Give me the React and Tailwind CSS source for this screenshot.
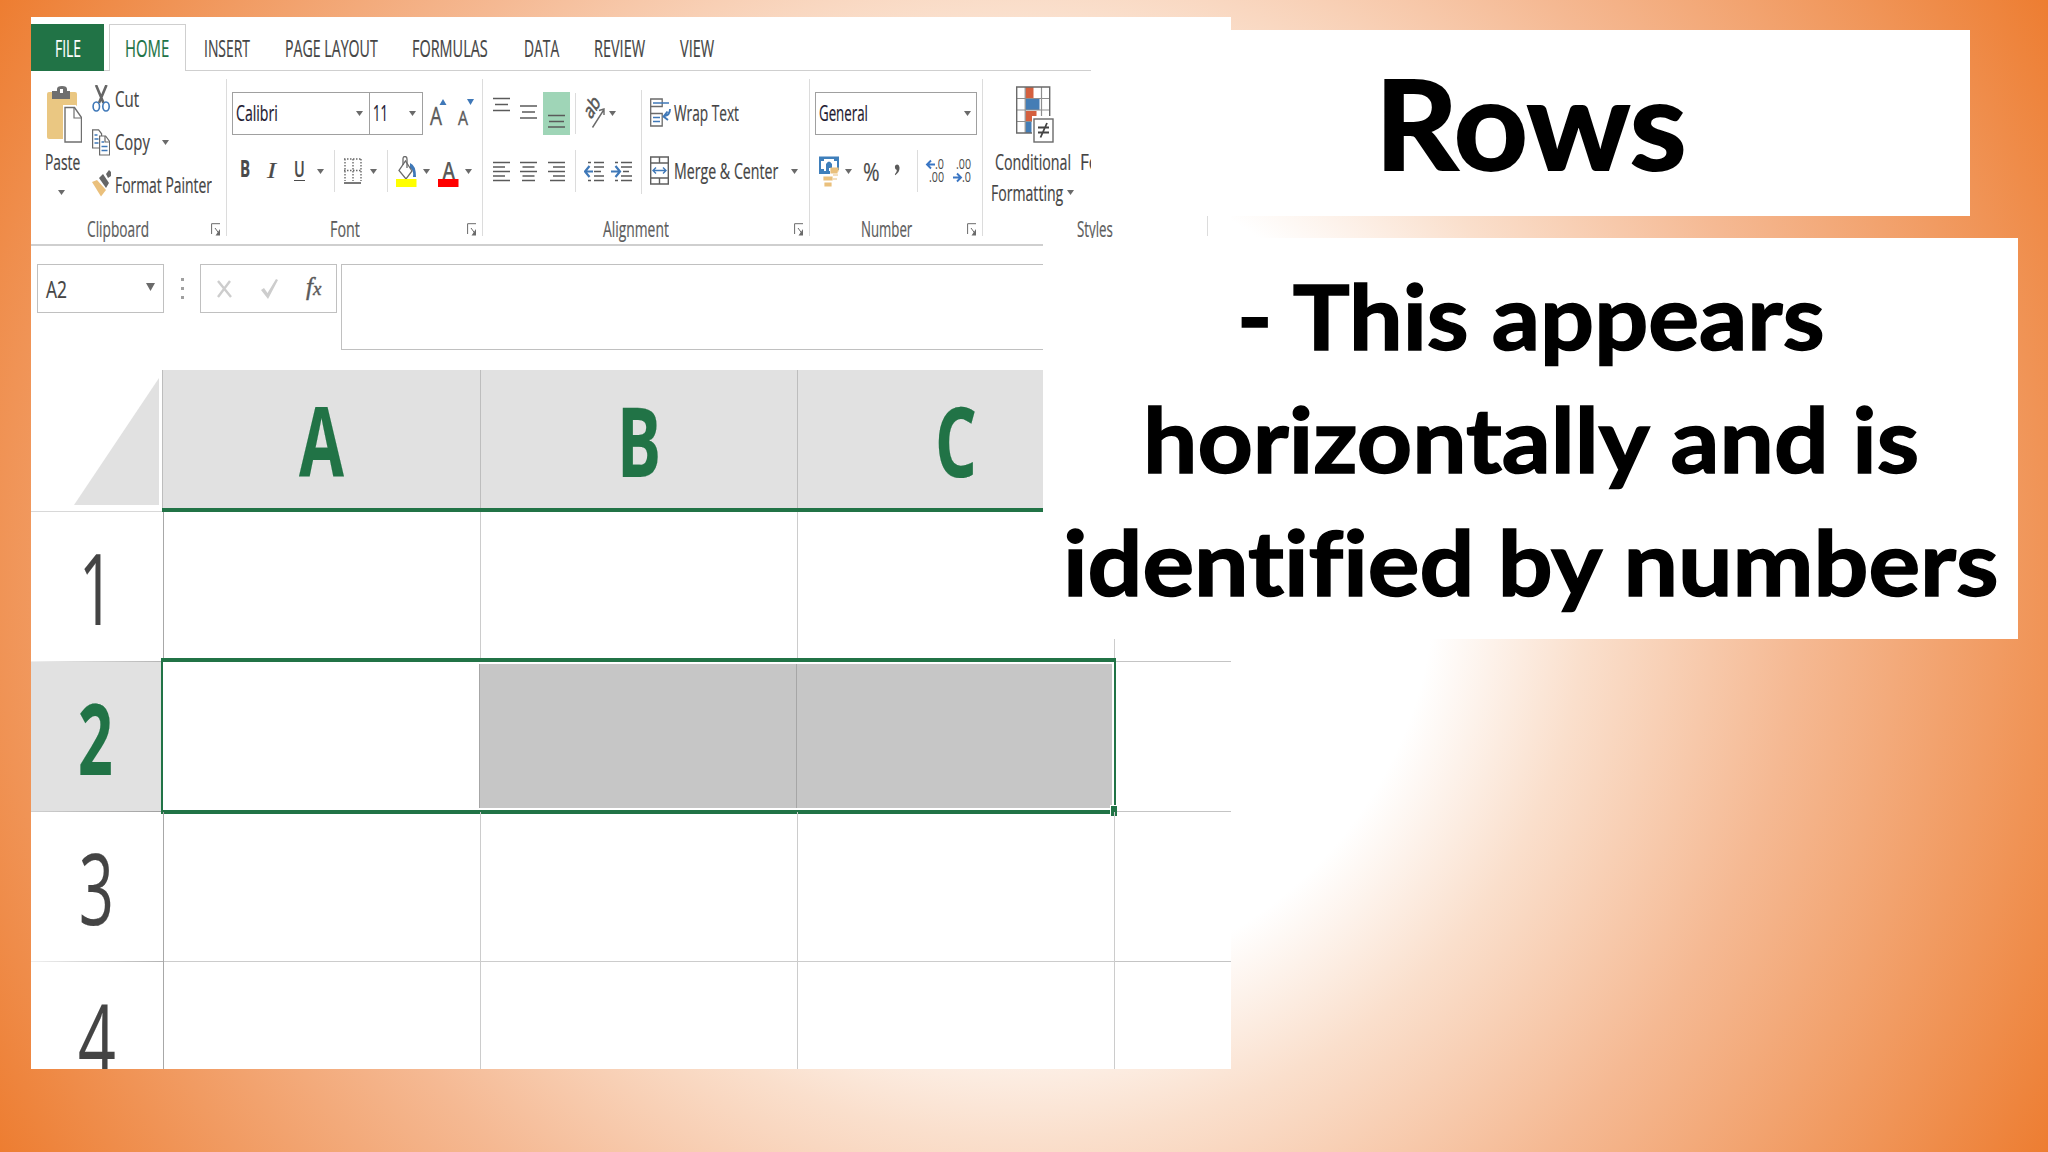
import { useLayoutEffect, useRef } from 'react'
import clsx from 'clsx'

// Text squeezed (or stretched) horizontally to an exact width
function Fit({ w, className, children }) {
  const ref = useRef(null)

  useLayoutEffect(() => {
    const el = ref.current
    el.style.transform = `scaleX(${w / el.offsetWidth})`
  }, [w, children])

  return (
    <span className={clsx('block shrink-0 leading-none', className)} style={{ width: w }}>
      <span ref={ref} className="inline-block origin-left whitespace-pre">{children}</span>
    </span>
  )
}

function Caret({ className }) {
  return (
    <svg viewBox="0 0 7 5" className={clsx('h-[5px] w-[7px] shrink-0', className)}>
      <path d="M0 0h7L3.5 5z" fill="#6a6a6a" />
    </svg>
  )
}

function Sep({ className }) {
  return <div className={clsx('w-px shrink-0 bg-[#dcdcdc]', className)} />
}

function Launcher() {
  return (
    <svg viewBox="0 0 10 13" className="h-[13px] w-[10px] shrink-0" fill="none" stroke="#6a6a6a">
      <path d="M.6 11V.7H9" />
      <path d="M4 5l4 5.5" />
      <path d="M9 6v6.5H4.5z" fill="#6a6a6a" stroke="none" />
    </svg>
  )
}

function Lines({ rows, className, w = 17 }) {
  return (
    <svg viewBox={`0 0 ${w} 43`} className={clsx('h-[43px] shrink-0', className)} stroke="#5a5a5a" strokeWidth="1.5">
      {rows.map(([x1, x2, y]) => (
        <path key={y} d={`M${x1} ${y}H${x2}`} />
      ))}
    </svg>
  )
}

function Group({ label, labelWidth, className, labelClass, launcher = true, children }) {
  return (
    <div className={clsx('flex h-[157px] shrink-0 flex-col border-r border-[#dcdcdc]', className)}>
      <div className="h-[137px] shrink-0">{children}</div>
      <div className="flex h-[25px] shrink-0 items-center">
        <Fit w={labelWidth} className={clsx('mt-[2px] text-[21px] text-[#5c5c5c]', labelClass)}>{label}</Fit>
        {launcher && <div className="mr-[5px] ml-auto pt-px"><Launcher /></div>}
      </div>
    </div>
  )
}

function PasteIcon() {
  return (
    <svg viewBox="0 0 36 57" className="h-[57px] w-[36px]">
      <rect x="1" y="6" width="30" height="47" rx="2" fill="#eac782" />
      <path d="M6 5h5V3q0-3 5-3t5 3v2h3v8H6z" fill="#6f6f6f" />
      <rect x="14" y="3" width="3" height="4" fill="#fff" />
      <path d="M17 19h13l7 10v30H17z" fill="#fff" />
      <path d="M19 21.5h9.500l7 10V56H19z" fill="#fff" stroke="#6f6f6f" strokeWidth="1.4" />
      <path d="M28 21.500V32h7" fill="none" stroke="#6f6f6f" strokeWidth="1.200" />
    </svg>
  )
}

function CutIcon() {
  return (
    <svg viewBox="0 0 18 27" className="h-[27px] w-[18px]" fill="none">
      <path d="M4 0l7.500 18M14.500 0L7 18" stroke="#666" strokeWidth="2.600" />
      <ellipse cx="4.300" cy="21.500" rx="3.200" ry="4.500" stroke="#3f78b8" strokeWidth="1.600" />
      <ellipse cx="14" cy="21.500" rx="3.200" ry="4.500" stroke="#3f78b8" strokeWidth="1.600" />
    </svg>
  )
}

function CopyIcon() {
  return (
    <svg viewBox="0 0 18 27" className="h-[27px] w-[18px]" fill="#fff" stroke="#6a6a6a" strokeWidth="1.200">
      <path d="M.6.800h6l3 4V19h-9z" />
      <path d="M2.500 6h3M2.500 10h4M2.500 14h4" stroke="#3f78b8" strokeWidth="1.500" />
      <path d="M7.600 7h6l4 5.500V26h-10z" />
      <path d="M13 7v6h4.500" fill="none" />
      <path d="M9.500 13h2.500M9.500 17.500h6M9.500 21.500h6" stroke="#3f78b8" strokeWidth="1.500" />
    </svg>
  )
}

function PainterIcon() {
  return (
    <svg viewBox="0 0 19 27" className="h-[27px] w-[19px]">
      <path d="M0 12l5-2 9 10-5 6.500z" fill="#eac07c" />
      <path d="M7 8l4-4 6 9-3 5z" fill="#666" />
      <path d="M14 4l3-4 2 2v4l-3 2z" fill="#666" />
    </svg>
  )
}

function ClipboardGroup() {
  return (
    <Group label="Clipboard" labelWidth={62} labelClass="ml-[56px]" className="w-[196px]">
      <div className="flex">
        <div className="flex w-[61px] flex-col pt-[7px] pl-[14px]">
          <div className="ml-px"><PasteIcon /></div>
          <div className="flex h-[39px] items-center"><Fit w={35}>Paste</Fit></div>
          <div className="flex h-[21px] items-center"><Caret className="ml-[13px]" /></div>
        </div>
        <div className="flex flex-col">
          <div className="flex h-[41px] items-center gap-[5px]">
            <div className="-mt-[2px]"><CutIcon /></div>
            <Fit w={24}>Cut</Fit>
          </div>
          <div className="flex h-[44px] items-center gap-[5px]">
            <CopyIcon />
            <Fit w={35}>Copy</Fit>
            <Caret className="ml-[7px]" />
          </div>
          <div className="flex h-[43px] items-center gap-1">
            <div className="-mt-[5px]"><PainterIcon /></div>
            <Fit w={97}>Format Painter</Fit>
          </div>
        </div>
      </div>
    </Group>
  )
}

function FontGroup() {
  return (
    <Group label="Font" labelWidth={30} labelClass="ml-[103px]" className="w-[256px]">
      <div className="flex flex-col gap-[14px] pt-[13px] pl-[5px]">
        <div className="flex h-[43px] items-center">
          <div className="flex h-[43px] w-[138px] items-center border-[1.5px] border-[#a0a0a0] pl-[3px] text-[#1d1830]">
            <Fit w={42}>Calibri</Fit>
            <Caret className="mr-1.5 ml-auto" />
          </div>
          <div className="-ml-px flex h-[43px] w-[54px] items-center border-[1.5px] border-[#a0a0a0] pl-[3px] text-[#1d1830]">
            <Fit w={15}>11</Fit>
            <Caret className="mr-[6px] ml-auto" />
          </div>
          <svg viewBox="0 0 17 30" className="ml-[7px] h-[30px] w-[17px] overflow-visible">
            <text x="0" y="25.500" fontSize="25" fill="#5a5a5a" stroke="#5a5a5a" strokeWidth=".4" textLength="12" lengthAdjust="spacingAndGlyphs">A</text>
            <path d="M9.500 6l3.500-6 3.500 6z" fill="#3f78b8" />
          </svg>
          <svg viewBox="0 0 17 30" className="ml-[11px] h-[30px] w-[17px] overflow-visible">
            <text x="0" y="25.500" fontSize="20" fill="#5a5a5a" stroke="#5a5a5a" strokeWidth=".4" textLength="10" lengthAdjust="spacingAndGlyphs">A</text>
            <path d="M9 0h7l-3.500 6z" fill="#3f78b8" />
          </svg>
        </div>
        <div className="flex h-[44px] items-center">
          <Fit w={10} className="ml-[8px] -mt-[3px] font-bold text-[#4a4a4a]">B</Fit>
          <Fit w={9} className="ml-[17px] -mt-[3px] text-[24px] italic text-[#4a4a4a] [font-family:'Liberation_Serif',serif]">I</Fit>
          <div className="ml-[18px] -mt-[2px] border-b-[1.5px] border-[#4a4a4a]">
            <Fit w={11} className="text-[21px] font-semibold text-[#4a4a4a]">U</Fit>
          </div>
          <Caret className="ml-[12px]" />
          <Sep className="ml-[10px] h-[42px]" />
          <svg viewBox="0 0 18 26" className="ml-[9px] h-[26px] w-[18px] shrink-0" stroke="#6a6a6a" fill="none" strokeWidth="1.400">
            <path d="M0 1h18M0 12.500h18M1 1v22M9 1v22M17 1v22" strokeDasharray="1.500 1.500" />
            <path d="M0 25h17" strokeWidth="1.800" />
          </svg>
          <Caret className="ml-[8px]" />
          <Sep className="ml-[10px] h-[42px]" />
          <svg viewBox="0 0 21 31" className="ml-[8px] h-[31px] w-[21px] shrink-0">
            <path d="M14 7q6 2 6 14h-3q1-7-3-9z" fill="#3f78b8" />
            <path d="M9.500 5l6.500 10-6 8-7-8.500z" fill="#fff" stroke="#6a6a6a" strokeWidth="1.300" />
            <path d="M7 9V3q0-2.500 2-2.500T11 3v9" fill="none" stroke="#6a6a6a" strokeWidth="1.300" />
            <rect x="0" y="23" width="20.500" height="8" fill="#ff0" />
          </svg>
          <Caret className="ml-[6px]" />
          <svg viewBox="0 0 21 31" className="ml-[8px] h-[31px] w-[21px] shrink-0 overflow-visible">
            <text x="4.500" y="22.500" fontSize="24" fontWeight="600" fill="#5a5a5a" textLength="12.500" lengthAdjust="spacingAndGlyphs">A</text>
            <rect x="0" y="23" width="20.500" height="8" fill="#f00" />
          </svg>
          <Caret className="ml-[6px]" />
        </div>
      </div>
    </Group>
  )
}

function AlignmentGroup() {
  return (
    <Group label="Alignment" labelWidth={66} labelClass="ml-[120px]" className="w-[327px]">
      <div className="flex">
        <div className="flex w-[158px] flex-col gap-[14px] pt-[13px] pl-[10px]">
          <div className="flex h-[43px] items-center">
            <Lines className="w-[17px]" rows={[[0, 17, 6.5], [2, 15, 12.5], [0, 17, 18.5]]} />
            <Lines className="ml-[10px] w-[17px]" rows={[[0, 17, 14], [2, 15, 20], [0, 17, 26]]} />
            <div className="ml-[6px] flex w-[27px] justify-center bg-[#9fd5b7]">
              <Lines className="w-[17px]" rows={[[0, 17, 23.5], [1, 16, 29.5], [0, 17, 35]]} />
            </div>
            <Sep className="ml-[5px] h-[41px]" />
            <svg viewBox="0 0 21 29" className="ml-[8px] h-[29px] w-[21px] shrink-0 overflow-visible">
              <text transform="translate(7 21) scale(.72 1) rotate(-50)" fontSize="22" fill="#555" stroke="#555" strokeWidth=".7" textLength="22" lengthAdjust="spacingAndGlyphs">ab</text>
              <path d="M8.500 28.500L20 10.500M15 11.500l5-1.500V16" fill="none" stroke="#6a6a6a" strokeWidth="1.400" />
            </svg>
            <Caret className="ml-[4px]" />
          </div>
          <div className="flex h-[44px] items-center">
            <Lines className="w-[17px]" rows={[[0, 17, 12.5], [0, 12, 17], [0, 17, 21.5], [0, 12, 26], [0, 17, 30.5]]} />
            <Lines className="ml-[10px] w-[17px]" rows={[[0, 17, 12.5], [2.5, 14.5, 17], [0, 17, 21.5], [2.5, 14.5, 26], [2, 15, 30.5]]} />
            <Lines className="ml-[11px] w-[17px]" rows={[[0, 17, 12.5], [5, 17, 17], [0, 17, 21.5], [5, 17, 26], [2, 17, 30.5]]} />
            <Sep className="ml-[10px] h-[42px]" />
            <svg viewBox="0 0 21 43" className="ml-[8px] h-[43px] w-[21px] shrink-0" fill="none" stroke="#5a5a5a" strokeWidth="1.500">
              <path d="M4 12.500h3M10 12.500h10M10 17h10M10 21.500h7M10 26h10M4 30.500h3M10 30.500h10" />
              <path d="M9 21.500H1.500M5.500 16l-4.500 5.500 4.500 5.500" stroke="#3f78b8" strokeWidth="2.200" />
            </svg>
            <svg viewBox="0 0 21 43" className="ml-[6px] h-[43px] w-[21px] shrink-0" fill="none" stroke="#5a5a5a" strokeWidth="1.500">
              <path d="M4 12.500h3M10 12.500h11M10 17h11M12 21.500h6M10 26h11M4 30.500h3M10 30.500h11" />
              <path d="M0 21.500h8M4.500 16L9 21.500 4.500 27" stroke="#3f78b8" strokeWidth="2.200" />
            </svg>
          </div>
        </div>
        <Sep className="mt-[11px] h-[104px]" />
        <div className="ml-[8px] flex flex-col gap-[14px] pt-[13px]">
          <div className="flex h-[43px] items-center">
            <svg viewBox="0 0 21 29" className="-mt-[3px] h-[29px] w-[21px] shrink-0" fill="none" stroke="#6a6a6a" strokeWidth="1.300">
              <path d="M.7 1h11.500v7.500H.7zM.7 15.500h11.500V28H.7z" />
              <path d="M.7 8.500v7" />
              <path d="M3 5h16M3 19.500h7M3 23.500h7" stroke="#3f78b8" strokeWidth="1.600" />
              <path d="M20 11q0 6.500-6 7M17.500 13.500l-4 5 4.500 3.500" stroke="#3f78b8" strokeWidth="1.900" />
            </svg>
            <Fit w={65} className="ml-[3px]">Wrap Text</Fit>
          </div>
          <div className="flex h-[44px] items-center">
            <svg viewBox="0 0 19 29" className="-mt-[2px] h-[29px] w-[19px] shrink-0" fill="none" stroke="#5f5f5f" strokeWidth="1.400">
              <path d="M.7 1h17.600v27H.7zM.7 7h17.600M.7 22h17.600M9.500 1v6M9.500 22v6" />
              <path d="M3.500 14.500h12M6 11.500l-3 3 3 3M13 11.500l3 3-3 3" stroke="#3f78b8" />
            </svg>
            <Fit w={104} className="mt-px ml-[5px]">Merge & Center</Fit>
            <Caret className="ml-[13px]" />
          </div>
        </div>
      </div>
    </Group>
  )
}

function DecimalIcon({ top, bottom, arrow, className }) {
  return (
    <svg viewBox="0 0 18 27" className={clsx('h-[27px] w-[18px] shrink-0 overflow-visible', className)} fill="#4a4a4a" fontSize="15">
      {top}
      {bottom}
      <path d={arrow} fill="none" stroke="#3a76c4" strokeWidth="1.900" />
    </svg>
  )
}

function NumberGroup() {
  return (
    <Group label="Number" labelWidth={51} labelClass="ml-[51px]" className="w-[173px]">
      <div className="flex flex-col gap-[14px] pt-[13px] pl-[5px]">
        <div className="flex h-[43px] w-[162px] items-center border-[1.5px] border-[#a0a0a0] pl-[3px] text-[#1d1830]">
          <Fit w={49}>General</Fit>
          <Caret className="mr-[5px] ml-auto" />
        </div>
        <div className="flex h-[44px] items-center">
          <svg viewBox="0 0 20 31" className="ml-[4px] h-[31px] w-[20px] shrink-0">
            <path d="M0 .500h20V14h-2V5h-3V3H5v2H2v8h3v2h6v3H0z" fill="#3f7fbb" />
            <path d="M7 8q3-5 6 0v4h-3v3H7z" fill="#3f7fbb" />
            <path d="M12 12h7v3h-1v2h-6zM5 21h8v3H5zM6 27h6v3H6zM14 19h5M14 23h4" fill="#eac07c" stroke="#eac07c" strokeWidth="1.200" />
          </svg>
          <Caret className="ml-[6px]" />
          <Fit w={17} className="ml-[11px] text-[26px] text-[#4a4a4a]">%</Fit>
          <svg viewBox="0 0 7 14" className="ml-[14px] -mt-[3px] h-[14px] w-[6px] shrink-0">
            <path d="M1 3.500Q1 .500 3.500.500T6.500 4.500Q6.500 10 1.500 13L1 12Q3.500 9.500 3.300 7 1 6.500 1 3.500z" fill="#5a5a5a" />
          </svg>
          <Sep className="ml-[17px] h-[42px]" />
          <DecimalIcon
            className="ml-[8px] -mt-px"
            top={<text x="9" y="12" textLength="9" lengthAdjust="spacingAndGlyphs">.0</text>}
            bottom={<text x="3" y="25" textLength="15" lengthAdjust="spacingAndGlyphs">.00</text>}
            arrow="M9 7.500H1.500M5 3.500l-4 4 4 4"
          />
          <DecimalIcon
            className="ml-[9px] -mt-px"
            top={<text x="3" y="12" textLength="15" lengthAdjust="spacingAndGlyphs">.00</text>}
            bottom={<text x="9" y="25" textLength="9" lengthAdjust="spacingAndGlyphs">.0</text>}
            arrow="M0 20.500h7.500M4 16.500l4 4-4 4"
          />
        </div>
      </div>
    </Group>
  )
}

function StylesGroup() {
  return (
    <Group label="Styles" labelWidth={36} labelClass="ml-[94px]" className="w-[225px]" launcher={false}>
      <div className="flex w-[120px] flex-col pt-[7px] pl-[8px]">
        <svg viewBox="0 0 38 57" className="ml-[25px] h-[57px] w-[38px]">
          <rect x=".7" y="1" width="33" height="46" fill="#fff" />
          <rect x="9.500" y="1" width="8" height="11" fill="#d4603f" />
          <rect x="9.500" y="13" width="14" height="11" fill="#447db5" />
          <rect x="9.500" y="25" width="11" height="10" fill="#d4603f" />
          <rect x="9.500" y="36" width="6" height="11" fill="#447db5" />
          <path d="M9.200 1v46M25.500 1v34M.7 12.500h33M.7 24h33M.7 35.500h20" stroke="#8f8f8f" fill="none" strokeWidth="1.200" />
          <path d="M33.700 30V1H.7v46h16" stroke="#6a6a6a" fill="none" strokeWidth="1.400" />
          <rect x="16" y="30" width="22" height="27" fill="#fff" />
          <rect x="18" y="33" width="19" height="23" fill="#fff" stroke="#6a6a6a" strokeWidth="1.400" />
          <path d="M22 41.500h11M22 46.500h11M31 37l-6.500 14.500" stroke="#444" strokeWidth="1.800" />
        </svg>
        <div className="flex h-[39px] items-center">
          <Fit w={76} className="ml-[4px]">Conditional</Fit>
          <Fit w={19} className="ml-[9px]">Fo</Fit>
        </div>
        <div className="flex h-[21px] items-center">
          <Fit w={72} className="mt-[2px]">Formatting</Fit>
          <Caret className="ml-[4px]" />
        </div>
      </div>
    </Group>
  )
}

const tabs = [
  { name: 'INSERT', w: 46, className: 'ml-[18px]' },
  { name: 'PAGE LAYOUT', w: 93, className: 'ml-[35px]' },
  { name: 'FORMULAS', w: 76, className: 'ml-[34px]' },
  { name: 'DATA', w: 35, className: 'ml-[36px]' },
  { name: 'REVIEW', w: 51, className: 'ml-[35px]' },
  { name: 'VIEW', w: 34, className: 'ml-[35px]' },
]

function TabBar() {
  return (
    <div className="flex h-[47px] shrink-0 text-[23px]">
      <div className="flex w-[73px] items-center justify-center bg-[#217346] pt-[2px] text-white">
        <Fit w={26}>FILE</Fit>
      </div>
      <div className="w-[5px] border-b-[1.5px] border-[#cfcfcf]" />
      <div className="flex w-[77px] items-center justify-center border-x-[1.5px] border-t-[1.5px] border-[#cfcfcf] pt-px pr-[2px] text-[#217346]">
        <Fit w={44}>HOME</Fit>
      </div>
      <div className="flex flex-1 items-center border-b-[1.5px] border-[#cfcfcf] pt-[2px]">
        {tabs.map(t => (
          <Fit key={t.name} w={t.w} className={t.className}>{t.name}</Fit>
        ))}
      </div>
    </div>
  )
}

function FormulaBar() {
  return (
    <div className="flex h-[124px] shrink-0 items-start pt-[18px] pl-[6px]">
      <div className="flex h-[49px] w-[127px] items-center border-[1.5px] border-[#c0c0c0] pl-[8px]">
        <Fit w={21} className="mt-px text-[24px]">A2</Fit>
        <svg viewBox="0 0 9 8" className="mr-[8px] -mt-[4px] ml-auto h-[8px] w-[9px]">
          <path d="M0 0h9L4.500 8z" fill="#6a6a6a" />
        </svg>
      </div>
      <div className="ml-[17px] flex h-[49px] flex-col justify-center gap-[6px]">
        <span className="size-[3px] bg-[#a0a0a0]" />
        <span className="size-[3px] bg-[#a0a0a0]" />
        <span className="size-[3px] bg-[#a0a0a0]" />
      </div>
      <div className="ml-[16px] flex h-[49px] w-[137px] items-center border-[1.5px] border-[#c0c0c0]">
        <svg viewBox="0 0 15 18" className="ml-[16px] h-[18px] w-[15px]">
          <path d="M1 1l13 16M13 1L1 17" stroke="#cdcdcd" strokeWidth="2.400" />
        </svg>
        <svg viewBox="0 0 17 20" className="ml-[29px] h-[20px] w-[17px]">
          <path d="M0 11l3-2 3.500 5L15 0l2 1L7 20z" fill="#cdcdcd" />
        </svg>
        <div className="ml-[28px] -mt-[4px] flex items-baseline italic text-[#5a5a5a] [font-family:'Liberation_Serif',serif] [-webkit-text-stroke:0.4px]">
          <Fit w={7} className="text-[25px]">f</Fit>
          <Fit w={8} className="text-[19px]">x</Fit>
        </div>
      </div>
      <div className="ml-[4px] h-[86px] flex-1 border-[1.5px] border-r-0 border-[#c0c0c0]" />
    </div>
  )
}

function RowHead({ n, active }) {
  return (
    <div className={clsx('flex w-[133px] shrink-0 flex-col border-r-[1.5px] border-[#a8a8a8]', active && 'bg-[#e1e1e1]')}>
      <div className={clsx('flex h-[149px] shrink-0 items-center justify-center', active ? 'pr-[3px]' : 'pr-px')}>
        <Fit
          w={n === 4 ? 38 : 35}
          className={clsx('text-[99px]', active ? 'font-bold text-[#217346]' : 'text-[#444]')}
        >
          {n}
        </Fit>
      </div>
      <div className={clsx('h-px bg-linear-to-r', active ? 'from-[#d0d0d0] to-[#a0a0a0]' : 'from-[#efefef] to-[#b4b4b4]')} />
    </div>
  )
}

function Row({ n }) {
  return (
    <div className="relative flex h-[150px] shrink-0">
      <RowHead n={n} active={n === 2} />
      <div className="w-[317px] shrink-0 border-r-[1.5px] border-b-[1.5px] border-[#cccccc]" />
      <div className="w-[317px] shrink-0 border-r-[1.5px] border-b-[1.5px] border-[#cccccc]" />
      <div className="w-[317px] shrink-0 border-r-[1.5px] border-b-[1.5px] border-[#cccccc]" />
      <div className="flex-1 border-b-[1.5px] border-[#c4c4c4]" />
      {/* selected range A2:C2 */}
      {n === 2 && (
        <div className="absolute -top-[4px] left-[130px] flex h-[156px] w-[955px] border-x-[2px] border-y-[4px] border-[#217346] bg-white py-[2px] pr-[2px]">
          <div className="w-[316px]" />
          <div className="w-[318px] border-x border-[#a6a6a6] bg-[#c6c6c6]" />
          <div className="flex-1 bg-[#c6c6c6]" />
          <div className="absolute -right-[3px] -bottom-[6px] h-[10px] w-[6px] bg-[#217346] shadow-[-1px_-1px_0_0_#fff]" />
        </div>
      )}
    </div>
  )
}

function Grid() {
  return (
    <div className="flex flex-col">
      <div className="flex h-[142px] shrink-0">
        <div className="flex w-[131px] shrink-0 justify-end border-b border-[#d8d8d8] pt-[8px] pr-[3px]">
          <svg viewBox="0 0 85 127" className="h-[127px] w-[85px]">
            <path d="M85 0v127H0z" fill="#e1e1e1" />
          </svg>
        </div>
        <div className="flex flex-1 border-b-[4px] border-[#217346] bg-[#e1e1e1] text-[97px] font-bold text-[#217346]">
          <div className="flex w-[319px] items-center justify-center border-x border-[#bdbdbd]">
            <Fit w={45}>A</Fit>
          </div>
          <div className="flex w-[317px] items-center justify-center border-r border-[#bdbdbd]">
            <Fit w={44}>B</Fit>
          </div>
          <div className="flex w-[317px] items-center justify-center border-r border-[#bdbdbd]">
            <Fit w={42}>C</Fit>
          </div>
        </div>
      </div>
      {[1, 2, 3, 4].map(n => (
        <Row key={n} n={n} />
      ))}
    </div>
  )
}

export default function App() {
  return (
    <div className="relative h-[1152px] w-[2048px] overflow-hidden bg-[radial-gradient(circle_farthest-corner_at_center,#ffffff_35%,#fadfcc_48%,#f5b993_66%,#ed7d31_100%)] pt-[17px] pl-[31px] [font-family:'Open_Sans','Noto_Sans',sans-serif]">
      <div className="flex h-[1052px] w-[1200px] flex-col overflow-hidden bg-white pt-[7px] text-[22.5px] text-[#444] [-webkit-text-stroke:0.2px]">
        <TabBar />
        <div className="flex h-[175px] shrink-0 border-b-2 border-[#cfcfcf] pt-[8px]">
          <ClipboardGroup />
          <FontGroup />
          <AlignmentGroup />
          <NumberGroup />
          <StylesGroup />
        </div>
        <FormulaBar />
        <Grid />
      </div>

      {/* Caption cards laid over the sheet */}
      <div className="absolute top-[30px] left-[1091px] flex h-[186px] w-[879px] justify-center bg-white pt-[30px] text-[125px] font-bold text-black [font-family:Lato,sans-serif] [-webkit-text-stroke:2px_black]">
        <Fit w={311}>Rows</Fit>
      </div>
      <div className="absolute top-[238px] left-[1043px] flex h-[401px] w-[975px] flex-col items-center bg-white pt-[32px] text-[90px] font-bold text-black [font-family:Lato,sans-serif] [font-variant-ligatures:none] [-webkit-text-stroke:1.5px_black]">
        <Fit w={588} className="h-[123px]">- This appears</Fit>
        <Fit w={776} className="h-[123px]">horizontally and is</Fit>
        <Fit w={935} className="h-[123px]">identified by numbers</Fit>
      </div>
    </div>
  )
}
